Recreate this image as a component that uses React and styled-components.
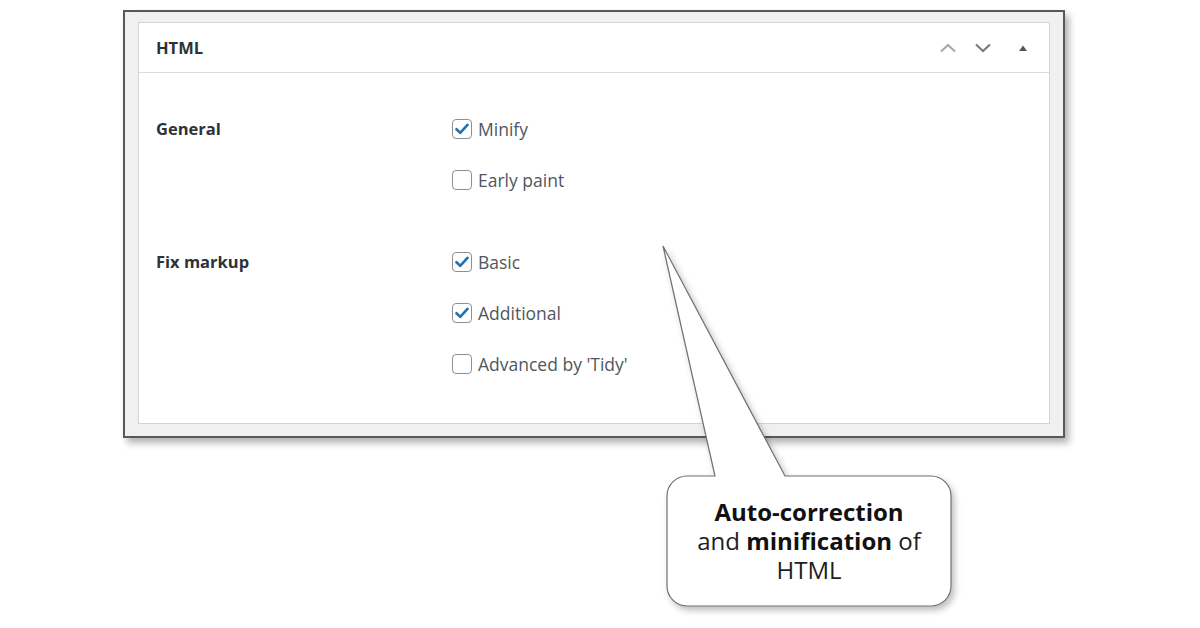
import React from "react";
import styled, { createGlobalStyle } from "styled-components";

const GlobalStyle = createGlobalStyle`
  html, body {
    margin: 0;
    padding: 0;
    background: #ffffff;
  }
  body {
    font-family: "Open Sans", "Noto Sans", Arial, sans-serif;
  }
`;

const Page = styled.div`
  position: relative;
  width: 1200px;
  height: 628px;
  overflow: hidden;
  padding: 10px 0 0 123px;
  box-sizing: border-box;
`;

const Frame = styled.div`
  width: 942px;
  height: 428px;
  box-sizing: border-box;
  border: 2px solid #55585c;
  background: #f0f0f1;
  padding: 10px 13px 12px 13px;
  box-shadow: 4px 5px 7px rgba(0, 0, 0, 0.3);
`;

const Panel = styled.section`
  height: 100%;
  box-sizing: border-box;
  background: #ffffff;
  border: 1px solid #d3d4d7;
  display: flex;
  flex-direction: column;
`;

const Header = styled.header`
  height: 49px;
  flex-shrink: 0;
  display: flex;
  align-items: center;
  justify-content: space-between;
  padding: 0 16px 0 17px;
  border-bottom: 1px solid #dcdcde;
  h2 {
    margin: 0;
    font-size: 16.5px;
    font-weight: 700;
    color: #2c3338;
  }
`;

const HeaderTools = styled.div`
  display: flex;
  align-items: center;
  gap: 15px;
`;

const Tool = styled.span`
  display: flex;
  align-items: center;
  justify-content: center;
  width: 20px;
  height: 20px;
  margin-left: ${(p) => p.$offset || 0}px;
`;

const Body = styled.div`
  padding: 46px 17px 0 17px;
  display: flex;
  flex-direction: column;
  gap: 62px;
`;

const Group = styled.div`
  display: grid;
  grid-template-columns: 296px 1fr;
  align-items: start;
`;

const Label = styled.div`
  font-size: 16.5px;
  font-weight: 700;
  color: #2c3338;
  line-height: 20px;
`;

const Options = styled.div`
  display: flex;
  flex-direction: column;
  gap: 31px;
`;

const Option = styled.label`
  display: flex;
  align-items: center;
  gap: 6px;
  height: 20px;
  font-size: 17.5px;
  color: #50575e;
`;

const Box = styled.span`
  width: 20px;
  height: 20px;
  flex-shrink: 0;
  box-sizing: border-box;
  border: 1.5px solid #8c8f94;
  border-radius: 4px;
  display: flex;
  align-items: center;
  justify-content: center;
  background: #fff;
`;

const Callout = styled.div`
  position: absolute;
  left: 650px;
  top: 236px;
  width: 320px;
  height: 390px;
`;

const CalloutText = styled.div`
  position: absolute;
  left: 17px;
  top: 240px;
  width: 284px;
  padding-top: 21px;
  text-align: center;
  font-size: 24px;
  line-height: 29px;
  color: #1e1e1e;
  b {
    font-weight: 700;
    color: #111;
  }
`;

function Check({ checked }) {
  return (
    <Box>
      {checked && (
        <svg width="14" height="12" viewBox="0 0 14 12">
          <path
            d="M1.5 6.2 L5.2 9.8 L12.5 1.8"
            fill="none"
            stroke="#2271b1"
            strokeWidth="2.6"
            strokeLinecap="round"
            strokeLinejoin="round"
          />
        </svg>
      )}
    </Box>
  );
}

const groups = [
  {
    label: "General",
    options: [
      { text: "Minify", checked: true },
      { text: "Early paint", checked: false },
    ],
  },
  {
    label: "Fix markup",
    options: [
      { text: "Basic", checked: true },
      { text: "Additional", checked: true },
      { text: "Advanced by 'Tidy'", checked: false },
    ],
  },
];

export default function App() {
  return (
    <>
      <GlobalStyle />
      <Page>
        <Frame>
          <Panel>
            <Header>
              <h2>HTML</h2>
              <HeaderTools>
                <Tool>
                  <svg width="18" height="10" viewBox="0 0 18 10">
                    <path d="M2 8.5 L9 2 L16 8.5" fill="none" stroke="#a7aaad" strokeWidth="2.2" />
                  </svg>
                </Tool>
                <Tool>
                  <svg width="18" height="10" viewBox="0 0 18 10">
                    <path d="M2 1.5 L9 8 L16 1.5" fill="none" stroke="#787c82" strokeWidth="2.2" />
                  </svg>
                </Tool>
                <Tool $offset={5}>
                  <svg width="10" height="8" viewBox="0 0 10 8">
                    <path d="M1 7 L5 1.5 L9 7 Z" fill="#50575e" />
                  </svg>
                </Tool>
              </HeaderTools>
            </Header>
            <Body>
              {groups.map((g) => (
                <Group key={g.label}>
                  <Label>{g.label}</Label>
                  <Options>
                    {g.options.map((o) => (
                      <Option key={o.text}>
                        <Check checked={o.checked} />
                        {o.text}
                      </Option>
                    ))}
                  </Options>
                </Group>
              ))}
            </Body>
          </Panel>
        </Frame>

        <Callout>
          <svg width="320" height="390" viewBox="0 0 320 390">
            <defs>
              <filter id="shadow" x="-10%" y="-10%" width="130%" height="130%">
                <feDropShadow dx="3" dy="4" stdDeviation="3" floodColor="#000" floodOpacity="0.25" />
              </filter>
            </defs>
            <path
              d="M13 10 L135 240 L281 240 A20 20 0 0 1 301 260 L301 350 A20 20 0 0 1 281 370 L37 370 A20 20 0 0 1 17 350 L17 260 A20 20 0 0 1 37 240 L65 240 Z"
              fill="#ffffff"
              stroke="#6f6f6f"
              strokeWidth="1.2"
              filter="url(#shadow)"
            />
          </svg>
          <CalloutText>
            <b>Auto-correction</b>
            <br />
            and <b>minification</b> of
            <br />
            HTML
          </CalloutText>
        </Callout>
      </Page>
    </>
  );
}
